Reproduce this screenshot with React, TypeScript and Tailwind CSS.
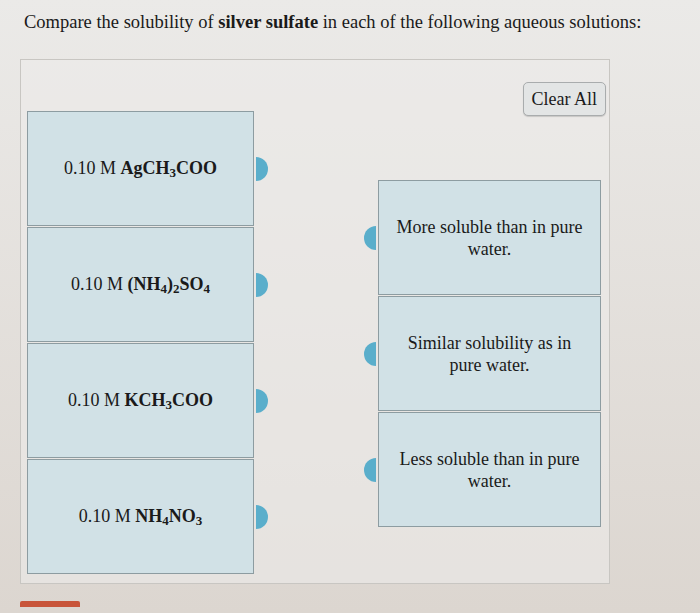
const Sub = ({ n }: { n: string }) => <sub className="text-[13px]">{n}</sub>;

const leftItems = [
  { prefix: '0.10 M ', formula: <>AgCH<Sub n="3" />COO</> },
  { prefix: '0.10 M ', formula: <>(NH<Sub n="4" />)<Sub n="2" />SO<Sub n="4" /></> },
  { prefix: '0.10 M ', formula: <>KCH<Sub n="3" />COO</> },
  { prefix: '0.10 M ', formula: <>NH<Sub n="4" />NO<Sub n="3" /></> },
];

const rightItems = [
  ['More soluble than in pure', 'water.'],
  ['Similar solubility as in', 'pure water.'],
  ['Less soluble than in pure', 'water.'],
];

function Tab({ side }: { side: 'left' | 'right' }) {
  return (
    <div
      className={
        side === 'right'
          ? 'w-[12px] h-[24px] bg-[#5aaecb] rounded-r-full ml-[2px]'
          : 'w-[12px] h-[24px] bg-[#5aaecb] rounded-l-full mr-[2px]'
      }
    />
  );
}

export default function App() {
  return (
    <div
      className="w-[700px] h-[613px] overflow-hidden bg-gradient-to-b from-[#ebeae8] to-[#dcd6d0] text-[#1a1a1a]"
      style={{ fontFamily: '"Liberation Serif", "Times New Roman", serif' }}
    >
      <h1 className="pt-[9px] pl-[24px] text-[18.5px] leading-[26px]">
        Compare the solubility of <b>silver sulfate</b> in each of the following aqueous solutions:
      </h1>

      <div className="mt-[24px] ml-[20px] w-[590px] h-[525px] border border-[#c8c6c2] bg-[#ecebe9]/60 pl-[6px] pt-[22px] flex">
        {/* draggable answer cards */}
        <div className="mt-[29px] flex flex-col gap-[1px]">
          {leftItems.map((item, i) => (
            <div key={i} className="flex items-center">
              <div className="w-[227px] h-[115px] border border-[#8d9ca1] bg-[#d1e1e6] flex items-center justify-center text-[18px]">
                <span>
                  {item.prefix}
                  <b>{item.formula}</b>
                </span>
              </div>
              <Tab side="right" />
            </div>
          ))}
        </div>

        <div className="ml-[96px] flex flex-col">
          <button className="self-end mr-[-5px] px-[8px] h-[34px] border border-[#a9acad] rounded-[5px] bg-[#e3e5e5] text-[18px] shadow-[0_1px_1px_rgba(0,0,0,0.15)]">
            Clear All
          </button>
          <div className="mt-[64px] flex flex-col gap-[1px]">
            {rightItems.map((lines, i) => (
              <div key={i} className="flex items-center">
                <Tab side="left" />
                <div className="w-[223px] h-[115px] border border-[#8d9ca1] bg-[#d1e1e6] flex flex-col items-center justify-center text-[18px] leading-[22px]">
                  <span>{lines[0]}</span>
                  <span>{lines[1]}</span>
                </div>
              </div>
            ))}
          </div>
        </div>
      </div>
      <div className="ml-[20px] mt-[17px] w-[60px] h-[6px] bg-[#c8553a] rounded-t-[2px]" />
    </div>
  );
}
